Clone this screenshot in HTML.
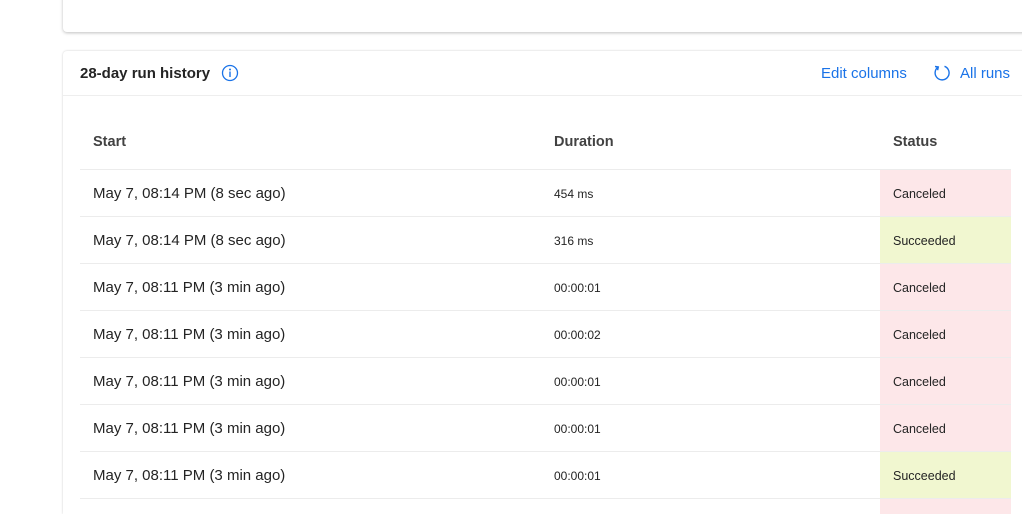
<!DOCTYPE html>
<html><head><style>
html,body{margin:0;width:1022px;height:514px;overflow:hidden}
body{background:#fff;font-family:"Liberation Sans",sans-serif;color:#242424;position:relative}
.card1{position:absolute;left:63px;top:-10px;width:1000px;height:42px;background:#fff;border-radius:4px;box-shadow:0 1px 3px rgba(0,0,0,.25)}
.card2{position:absolute;left:63px;top:51px;width:1000px;height:463px;background:#fff;border-radius:4px 4px 0 0;box-shadow:0 0 2px rgba(0,0,0,.2)}
.hdr{position:absolute;left:0;top:0;width:100%;height:44px;border-bottom:1px solid #eee}
.title{position:absolute;left:17px;top:14px;font-size:15px;font-weight:bold;color:#242424}
.info{position:absolute;left:158px;top:13px}
.link{position:absolute;top:14px;font-size:15px;color:#1a73e8}
.row{position:absolute;left:17px;width:931px;height:46px;border-bottom:1px solid #ececec}
.row span{position:absolute;top:15px}
.s{left:13px;font-size:15px}
.d{left:474px;font-size:12px;top:17px!important}
.st{position:absolute;left:800px;top:0;width:131px;height:46px;font-size:12.5px}
.st b{font-weight:normal;position:absolute;left:13px;top:17px}
.c{background:#fde7e9}.g{background:#f1f7d0}
.th{font-weight:bold;font-size:14.5px;color:#424242}
.hrow span{top:11px}
</style></head><body>
<div class="card1"></div>
<div class="card2">
<div class="hdr">
<div class="title">28-day run history</div>
<svg class="info" width="18" height="18" viewBox="0 0 18 18"><circle cx="9" cy="9" r="7.5" fill="none" stroke="#1a73e8" stroke-width="1.3"/><circle cx="9" cy="5.5" r="1" fill="#1a73e8"/><rect x="8.3" y="7.5" width="1.4" height="5.5" fill="#1a73e8"/></svg>
<div class="link" style="left:758px">Edit columns</div>
<svg style="position:absolute;left:869px;top:12px" width="20" height="20" viewBox="0 0 20 20"><path d="M6 4.2A7 7 0 1 0 12.5 3.3" fill="none" stroke="#1a73e8" stroke-width="1.4"/><path d="M3 3.5L6.3 4 5.6 7.2" fill="none" stroke="#1a73e8" stroke-width="1.4"/></svg>
<div class="link" style="left:897px">All runs</div>
</div>
<div class="row hrow" style="top:72px"><span class="s th">Start</span><span class="th" style="left:474px">Duration</span><span class="th" style="left:813px">Status</span></div>
<div class="row" style="top:119px"><span class="s">May 7, 08:14 PM (8 sec ago)</span><span class="d">454 ms</span><div class="st c"><b>Canceled</b></div></div>
<div class="row" style="top:166px"><span class="s">May 7, 08:14 PM (8 sec ago)</span><span class="d">316 ms</span><div class="st g"><b>Succeeded</b></div></div>
<div class="row" style="top:213px"><span class="s">May 7, 08:11 PM (3 min ago)</span><span class="d">00:00:01</span><div class="st c"><b>Canceled</b></div></div>
<div class="row" style="top:260px"><span class="s">May 7, 08:11 PM (3 min ago)</span><span class="d">00:00:02</span><div class="st c"><b>Canceled</b></div></div>
<div class="row" style="top:307px"><span class="s">May 7, 08:11 PM (3 min ago)</span><span class="d">00:00:01</span><div class="st c"><b>Canceled</b></div></div>
<div class="row" style="top:354px"><span class="s">May 7, 08:11 PM (3 min ago)</span><span class="d">00:00:01</span><div class="st c"><b>Canceled</b></div></div>
<div class="row" style="top:401px"><span class="s">May 7, 08:11 PM (3 min ago)</span><span class="d">00:00:01</span><div class="st g"><b>Succeeded</b></div></div>
<div class="row" style="top:448px;border:none;height:15px"><div class="st c" style="height:15px"></div></div>
</div>
</body></html>
